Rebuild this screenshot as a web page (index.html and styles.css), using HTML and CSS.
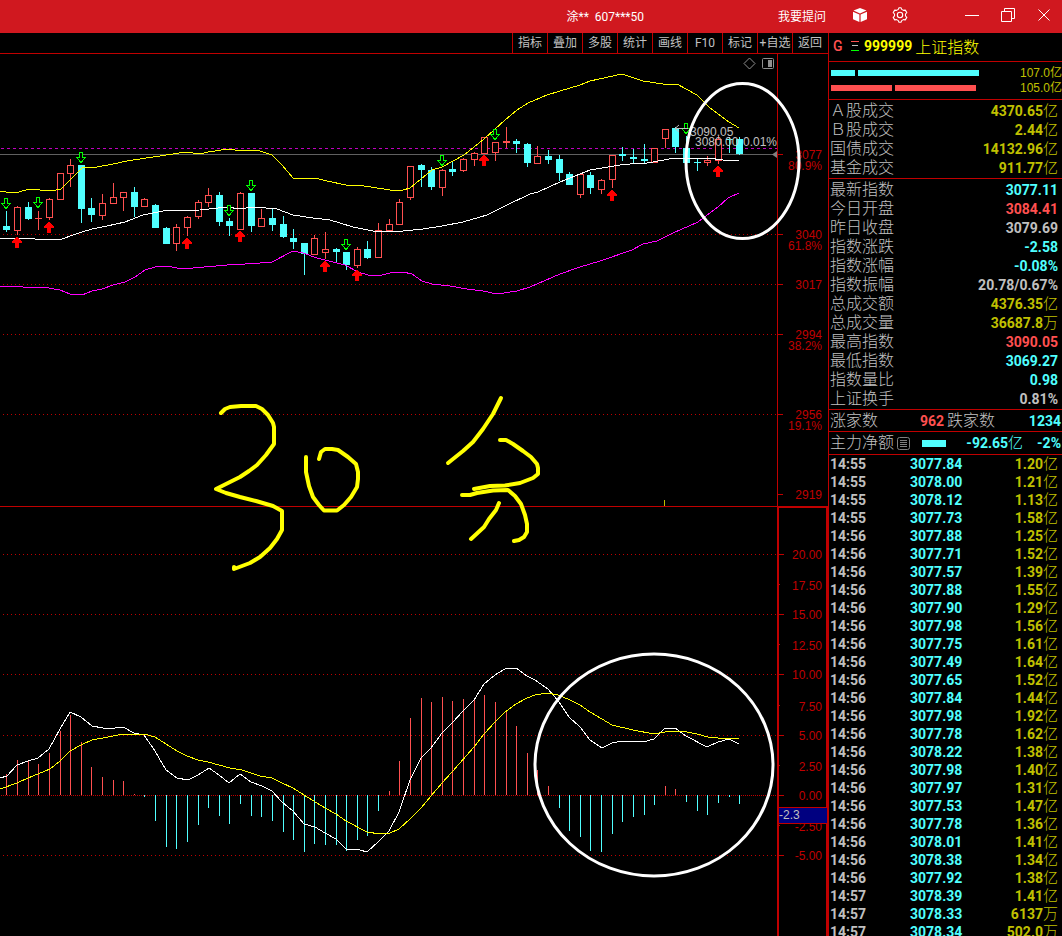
FILE: index.html
```html
<!DOCTYPE html>
<html lang="zh-CN">

<head>
    <meta charset="UTF-8">
    <meta name="viewport" content="width=device-width, initial-scale=1.0">
    <title>上证指数 999999</title>
    <link rel="stylesheet" href="styles.css">
</head>

<body>
    <header class="titlebar">
        <span class="account">涂** &nbsp;607***50</span>
        <a href="#" class="ask">我要提问</a>
        <button type="button" class="tool-btn" aria-label="应用">
            <svg width="16" height="16" viewBox="0 0 16 16" fill="#fff">
                <path d="M8 1 L14.5 3.6 L8 6.4 L1.5 3.6Z" />
                <path d="M1 4.8 L7.4 7.5 V15 L1 12.2Z" />
                <path d="M15 4.8 L8.6 7.5 V15 L15 12.2Z" />
            </svg>
        </button>
        <button type="button" class="tool-btn" aria-label="设置">
            <svg width="16" height="16" viewBox="0 0 16 16" fill="none" stroke="#fff" stroke-width="1.1" stroke-linejoin="round">
                <path d="M6.3 2.4 L7 .7 H9 L9.7 2.4 L11.4 3.4 L13.3 3.1 L14.8 5.6 L13.5 7 V9 L14.8 10.4 L13.3 12.9 L11.4 12.6 L9.7 13.6 L9 15.3 H7 L6.3 13.6 L4.6 12.6 L2.7 12.9 L1.2 10.4 L2.5 9 V7 L1.2 5.6 L2.7 3.1 L4.6 3.4Z" />
                <circle cx="8" cy="8" r="2.7" />
            </svg>
        </button>
        <div class="window-btns">
            <button type="button" aria-label="最小化">
                <svg width="14" height="14" viewBox="0 0 14 14" stroke="#fff"><path d="M0 7.5H14" /></svg>
            </button>
            <button type="button" aria-label="还原">
                <svg width="14" height="14" viewBox="0 0 14 14" fill="none" stroke="#fff"><path d="M.5 3.5H10.5V13.5H.5Z M3.5 3.5V.5H13.5V10.5H10.5" /></svg>
            </button>
            <button type="button" aria-label="关闭">
                <svg width="12" height="12" viewBox="0 0 12 12" stroke="#fff"><path d="M.5 .5L11.5 11.5M11.5 .5L.5 11.5" /></svg>
            </button>
        </div>
    </header>

    <main class="workspace">
        <section class="chart-pane">
            <nav class="toolbar">
                <button type="button">指标</button>
                <button type="button">叠加</button>
                <button type="button">多股</button>
                <button type="button">统计</button>
                <button type="button">画线</button>
                <button type="button">F10</button>
                <button type="button">标记</button>
                <button type="button">+自选</button>
                <button type="button">返回</button>
            </nav>

            <svg class="chart" viewBox="0 54 828 882">
                <!-- grid -->
                <g class="grid">
                    <path d="M3 234.5H777M3 284.5H777M3 334.5H777M3 414.5H777" />
                    <path d="M3 554.5H777M3 614.5H777M3 674.5H777M3 735.5H777M3 855.5H777" />
                    <path class="zero" d="M1 795.5H777" />
                </g>
                <path class="price-line" d="M1 148.5H777" />
                <path class="last-line" d="M0 154.5H777" />

                <!-- frame and axis -->
                <g class="frame">
                    <path d="M777.5 54V506M0 506.5H828" />
                    <path class="thick" d="M778 936V507H827V936" />
                    <path d="M778 154.5h5M778 234.5h5M778 284.5h5M778 334.5h5M778 414.5h5M778 494.5h5" />
                    <path d="M779 554.5h5M779 614.5h5M779 674.5h5M779 735.5h5M779 795.5h5M779 855.5h5" />
                    <path d="M779 584.5h1M779 644.5h1M779 705.5h1M779 765.5h1M779 825.5h1" />
                </g>

                <g id="candles"></g>
                <g id="hist"></g>

                <polyline class="line yellow" points="0,191 6,192 19,192 29,189 51,191 61,189 82,168 97,167 113,164 127,161 153,157 173,154 185,152 200,154 208,152 228,149 242,151 255,150 260,151 272,155 282,165 293,178 303,179 315,178 327,181 346,185 358,185 390,190 403,190 410,188 432,170 442,167 453,161 464,155 484,139 505,120 517,110 528,103 547,95 560,91 580,85 590,81 622,74 643,81 663,84 677,84 697,95 710,108 729,122 739,128" />
                <polyline class="line white" points="0,238 23,239 29,238 35,239 62,239 73,235 82,232 92,229 107,226 125,222 143,215 163,211 200,210 218,208 230,207 237,209 255,207 277,209 293,215 313,218 330,220 353,227 378,232 403,231 423,229 442,226 463,222 487,215 505,206 530,194 538,192 560,182 590,170 620,165 630,164 647,163 675,158 708,158 723,160 739,160" />
                <polyline class="line magenta" points="0,286 23,287 43,287 60,290 70,294 82,295 92,291 102,289 113,285 125,282 135,277 145,270 155,267 167,266 177,268 193,268 227,265 245,264 260,263 272,262 293,251 303,253 317,258 345,265 358,272 368,275 378,276 390,273 403,272 412,274 422,281 432,284 450,286 467,289 483,291 497,294 517,291 530,287 560,274 580,267 600,261 632,250 643,244 657,241 673,233 698,222 710,213 718,207 728,198 739,193" />

                <polyline class="line white" points="0,778 7,776 17,765 28,761 38,758 49,749 60,729 70,712 81,717 92,726 103,728 115,728 123,727 134,733 144,735 155,751 166,770 177,778 188,780 198,775 209,768 219,775 229,783 240,774 251,782 262,786 272,791 282,802 293,811 304,824 315,827 325,833 336,839 346,849 360,850 367,852 378,842 389,831 399,812 410,780 421,758 431,748 442,733 452,723 463,711 474,700 484,684 495,675 505,669 516,668 527,676 535,680 548,689 559,702 569,717 580,727 590,740 602,748 612,743 623,741 637,741 643,742 654,739 665,728 675,728 686,736 707,747 718,742 729,739 739,744" />
                <polyline class="line yellow" points="0,789 17,783 28,778 50,769 60,761 70,751 81,745 92,740 103,738 123,734 144,734 155,737 166,744 177,751 187,756 198,760 208,762 230,768 242,770 260,776 272,778 282,783 293,788 304,795 325,808 336,814 346,821 367,832 380,834 390,833 399,829 410,819 421,808 442,783 452,772 474,747 484,734 495,722 505,712 516,704 527,698 535,695 547,693 558,695 570,700 580,705 590,712 602,719 612,725 633,730 654,734 665,732 675,731 687,732 697,734 708,737 718,738 732,738 739,739" />
                <path class="line tick" d="M664.5 500V506" />

                <g id="signals"></g>

                <g class="note">
                    <path d="M675 128.5H688M679 125L675 128.5L679 132" />
                    <text x="690" y="136">3090.05</text>
                    <text x="695" y="146">3080.00</text>
                    <text x="777" y="146" text-anchor="end">0.01%</text>
                </g>
                <path class="marker" d="M772 154.5L777 151V158Z" />

                <g class="corner">
                    <path d="M749.5 58L755 63.5L749.5 69L744 63.5Z" />
                    <rect x="762.5" y="58.5" width="11" height="10" rx="1" />
                    <rect class="fill" x="768" y="60" width="4" height="7" />
                </g>

                <g class="axis">
                    <text x="822" y="159">3077</text>
                    <text x="822" y="170">80.9%</text>
                    <text x="822" y="239">3040</text>
                    <text x="822" y="250">61.8%</text>
                    <text x="822" y="289">3017</text>
                    <text x="822" y="339">2994</text>
                    <text x="822" y="350">38.2%</text>
                    <text x="822" y="419">2956</text>
                    <text x="822" y="430">19.1%</text>
                    <text x="822" y="499">2919</text>
                    <text x="822" y="559">20.00</text>
                    <text x="822" y="590">17.50</text>
                    <text x="822" y="619">15.00</text>
                    <text x="822" y="650">12.50</text>
                    <text x="822" y="679">10.00</text>
                    <text x="822" y="711">7.50</text>
                    <text x="822" y="740">5.00</text>
                    <text x="822" y="771">2.50</text>
                    <text x="822" y="800">0.00</text>
                    <text x="822" y="831">-2.50</text>
                    <text x="822" y="860">-5.00</text>
                </g>
                <rect class="cursor-box" x="778.5" y="807.5" width="49" height="16" />
                <text class="cursor-text" x="779" y="819">-2.3</text>

                <!-- hand drawn marks -->
                <ellipse class="ring" cx="742.5" cy="161" rx="56.5" ry="77.5" />
                <ellipse class="ring" cx="654" cy="765" rx="119" ry="111" />
                <g class="pen">
                    <path d="M221 413L225 409L230 407L241 406H256L262 409L268 415L273 423L274 427V444L266 455L257 465L249 471L240 477L216 489L226 493L240 497L256 501L273 506L282 511V530L277 539L270 548L260 557L250 563L234 569V567" />
                    <path d="M306 457V472L309 486L313 497L319 505L324 510.500H337L344 505L351 497L357 487L358 479V472L356 464L348 457L338 450L332 449H325L321 452L319 459" />
                    <path d="M501 398L493 414L483 429L473 442L463 451L448 463" />
                    <path d="M500 440H506L513 444L523 451L531 457L537 464L538 468V474L533 478L520 483L505 485.500L490 486L474 489" />
                    <path d="M462 495H470L477 493L493 490.500L508 490L515 496L521 504L525 515L527 524V532L524 537L519 540L514 541" />
                    <path d="M499 503L496 510L489 519L484 527L471 539" />
                </g>
            </svg>
        </section>

        <aside class="quote">
            <div class="quote-head">
                <span class="flag">G</span>
                <svg width="8" height="10" viewBox="0 0 8 10">
                    <path d="M0 .5H8" stroke="#ff5050" />
                    <path d="M1 4.5H7" stroke="#c0c0c0" />
                    <path d="M0 9.500H8" stroke="#00ff00" />
                </svg>
                <b>999999</b>
                <h1>上证指数</h1>
            </div>

            <div class="flows">
                <div class="flow down"><i style="width: 24px"></i><i style="width: 121px"></i><span>107.0亿</span></div>
                <div class="flow up"><i style="width: 61px"></i><i style="width: 81px"></i><span>105.0亿</span></div>
            </div>

            <table class="stats">
                <tr><th>Ａ股成交</th><td class="amount">4370.65<span>亿</span></td></tr>
                <tr><th>Ｂ股成交</th><td class="amount">2.44<span>亿</span></td></tr>
                <tr><th>国债成交</th><td class="amount">14132.96<span>亿</span></td></tr>
                <tr><th>基金成交</th><td class="amount">911.77<span>亿</span></td></tr>
            </table>

            <table class="stats">
                <tr><th>最新指数</th><td class="down">3077.11</td></tr>
                <tr><th>今日开盘</th><td class="up">3084.41</td></tr>
                <tr><th>昨日收盘</th><td>3079.69</td></tr>
                <tr><th>指数涨跌</th><td class="down">-2.58</td></tr>
                <tr><th>指数涨幅</th><td class="down">-0.08%</td></tr>
                <tr><th>指数振幅</th><td>20.78/0.67%</td></tr>
                <tr><th>总成交额</th><td class="amount">4376.35<span>亿</span></td></tr>
                <tr><th>总成交量</th><td class="amount">36687.8<span>万</span></td></tr>
                <tr><th>最高指数</th><td class="up">3090.05</td></tr>
                <tr><th>最低指数</th><td class="down">3069.27</td></tr>
                <tr><th>指数量比</th><td class="down">0.98</td></tr>
                <tr><th>上证换手</th><td>0.81%</td></tr>
            </table>

            <div class="breadth">
                <span class="label">涨家数</span><b class="up">962</b>
                <span class="label">跌家数</span><b class="down">1234</b>
            </div>

            <div class="netflow">
                <span class="label">主力净额</span>
                <svg width="13" height="13" viewBox="0 0 13 13" fill="none" stroke="#808080">
                    <rect x=".5" y=".5" width="12" height="12" rx="2" />
                    <path d="M3 3.500H10M3 5.500H10M3 7.500H10M3 9.500H10" />
                </svg>
                <i class="bar"></i>
                <b class="down net">-92.65<span>亿</span></b>
                <b class="down">-2%</b>
            </div>

            <table class="ticks">
                <tr><td>14:55</td><td class="down">3077.84</td><td class="amount">1.20<span>亿</span></td></tr>
                <tr><td>14:55</td><td class="down">3078.00</td><td class="amount">1.21<span>亿</span></td></tr>
                <tr><td>14:55</td><td class="down">3078.12</td><td class="amount">1.13<span>亿</span></td></tr>
                <tr><td>14:55</td><td class="down">3077.73</td><td class="amount">1.58<span>亿</span></td></tr>
                <tr><td>14:56</td><td class="down">3077.88</td><td class="amount">1.25<span>亿</span></td></tr>
                <tr><td>14:56</td><td class="down">3077.71</td><td class="amount">1.52<span>亿</span></td></tr>
                <tr><td>14:56</td><td class="down">3077.57</td><td class="amount">1.39<span>亿</span></td></tr>
                <tr><td>14:56</td><td class="down">3077.88</td><td class="amount">1.55<span>亿</span></td></tr>
                <tr><td>14:56</td><td class="down">3077.90</td><td class="amount">1.29<span>亿</span></td></tr>
                <tr><td>14:56</td><td class="down">3077.98</td><td class="amount">1.56<span>亿</span></td></tr>
                <tr><td>14:56</td><td class="down">3077.75</td><td class="amount">1.61<span>亿</span></td></tr>
                <tr><td>14:56</td><td class="down">3077.49</td><td class="amount">1.64<span>亿</span></td></tr>
                <tr><td>14:56</td><td class="down">3077.65</td><td class="amount">1.52<span>亿</span></td></tr>
                <tr><td>14:56</td><td class="down">3077.84</td><td class="amount">1.44<span>亿</span></td></tr>
                <tr><td>14:56</td><td class="down">3077.98</td><td class="amount">1.92<span>亿</span></td></tr>
                <tr><td>14:56</td><td class="down">3077.78</td><td class="amount">1.62<span>亿</span></td></tr>
                <tr><td>14:56</td><td class="down">3078.22</td><td class="amount">1.38<span>亿</span></td></tr>
                <tr><td>14:56</td><td class="down">3077.98</td><td class="amount">1.40<span>亿</span></td></tr>
                <tr><td>14:56</td><td class="down">3077.97</td><td class="amount">1.31<span>亿</span></td></tr>
                <tr><td>14:56</td><td class="down">3077.53</td><td class="amount">1.47<span>亿</span></td></tr>
                <tr><td>14:56</td><td class="down">3077.78</td><td class="amount">1.36<span>亿</span></td></tr>
                <tr><td>14:56</td><td class="down">3078.01</td><td class="amount">1.41<span>亿</span></td></tr>
                <tr><td>14:56</td><td class="down">3078.38</td><td class="amount">1.34<span>亿</span></td></tr>
                <tr><td>14:56</td><td class="down">3077.92</td><td class="amount">1.38<span>亿</span></td></tr>
                <tr><td>14:57</td><td class="down">3078.39</td><td class="amount">1.41<span>亿</span></td></tr>
                <tr><td>14:57</td><td class="down">3078.33</td><td class="amount">6137<span>万</span></td></tr>
                <tr><td>14:57</td><td class="down">3078.34</td><td class="amount">502.0<span>万</span></td></tr>
            </table>
        </aside>
    </main>

    <script src="chart.js"></script>
</body>

</html>
```
FILE: styles.css
```css
* {
    margin: 0;
    padding: 0;
    box-sizing: border-box;
}

body {
    height: 100vh;
    display: flex;
    flex-direction: column;
    overflow: hidden;
    background: #000;
    color: #c0c0c0;
    font-family: Roboto, "Noto Sans CJK SC", sans-serif;
    font-size: 14px;
}

button {
    background: none;
    border: none;
    color: inherit;
    font-family: inherit;
    cursor: pointer;
}

svg {
    display: block;
}

/* Title bar */
.titlebar {
    flex: none;
    height: 33px;
    padding-bottom: 3px;
    display: flex;
    align-items: center;
    justify-content: flex-end;
    background: #d0181f;
    color: #fff;
}

.account {
    margin-right: 134px;
    font-size: 12px;
}

.ask {
    margin-right: 14px;
    color: #fff;
    font-size: 12px;
    text-decoration: none;
}

.tool-btn {
    width: 40px;
    height: 30px;
    display: flex;
    align-items: center;
    justify-content: center;
}

.window-btns {
    display: flex;
    margin-left: 34px;
}

.window-btns button {
    width: 36px;
    height: 30px;
    display: flex;
    align-items: center;
    justify-content: center;
}

/* Layout */
.workspace {
    flex: 1;
    min-height: 0;
    display: grid;
    grid-template-columns: minmax(0, 1fr) 234px;
    overflow: hidden;
}

.chart-pane {
    min-height: 0;
    overflow: hidden;
}

.toolbar {
    height: 21px;
    padding-right: 1px;
    display: flex;
    justify-content: flex-end;
    border-bottom: 1px solid #c00000;
}

.toolbar button {
    width: 35px;
    border-left: 1px solid #c00000;
    color: #c0c0c0;
    font-size: 12px;
    line-height: 20px;
    white-space: nowrap;
}

/* Chart */
.chart {
    width: 100%;
    height: auto;
    font-family: "Liberation Sans", Arial, sans-serif;
    font-size: 12px;
}

.grid path,
.price-line,
.last-line,
.frame path,
.line,
#candles,
#hist,
#signals {
    shape-rendering: crispEdges;
}

.grid path {
    stroke: #c00000;
    stroke-dasharray: 1 3;
}

.grid .zero {
    stroke-dasharray: 1 1;
}

.price-line {
    stroke: #c000c0;
    stroke-dasharray: 3 3;
}

.last-line {
    stroke: #606060;
}

.frame path {
    fill: none;
    stroke: #c00000;
}

.frame .thick {
    stroke-width: 2;
}

.line {
    fill: none;
    stroke-width: 1;
}

.yellow {
    stroke: #ffff00;
}

.white {
    stroke: #fff;
}

.magenta {
    stroke: #ff00ff;
}

.tick {
    stroke: #c0c000;
}

.rise {
    fill: #000;
    stroke: #ff5050;
}

.fall {
    fill: #50ffff;
    stroke: #50ffff;
}

.buy {
    fill: #ff0000;
}

.sell {
    fill: #000;
    stroke: #00ff00;
}

.note path {
    fill: none;
    stroke: #c0c0c0;
}

.note text,
.cursor-text {
    fill: #c0c0c0;
}

.marker {
    fill: #808080;
}

.corner path,
.corner rect {
    fill: none;
    stroke: #909090;
}

.corner .fill {
    fill: #909090;
    stroke: none;
}

.axis text {
    fill: #c00000;
    text-anchor: end;
}

.cursor-box {
    fill: #000080;
    stroke: #c00000;
}

.ring {
    fill: none;
    stroke: #fff;
    stroke-width: 3;
}

.pen path {
    fill: none;
    stroke: #ffff00;
    stroke-width: 4;
    stroke-linecap: round;
    stroke-linejoin: round;
}

/* Quote panel */
.quote {
    min-height: 0;
    overflow: hidden;
    border-left: 1px solid #c00000;
}

.quote-head {
    height: 29px;
    padding: 0 0 2px 4px;
    display: flex;
    align-items: center;
    border-bottom: 1px solid #c00000;
    color: #ffff00;
}

.quote-head .flag {
    width: 18px;
    color: #ff5050;
    font-weight: 500;
}

.quote-head b {
    margin: 0 3px 0 5px;
}

.quote-head h1 {
    font-size: 16px;
    font-weight: 300;
}

.flows {
    height: 38px;
    padding: 3px 0 3px 2px;
    border-bottom: 1px solid #c00000;
}

.flow {
    height: 15px;
    display: flex;
    align-items: center;
    gap: 3px;
}

.flow i {
    height: 6px;
    background: currentColor;
}

.flow span {
    margin-left: auto;
    color: #c0c000;
    font-family: "Liberation Sans", "Noto Sans CJK SC", sans-serif;
    font-size: 12px;
    line-height: 14px;
}

.up {
    color: #ff5050;
}

.down {
    color: #50ffff;
}

.amount {
    color: #c0c000;
}

.amount span,
.net span {
    font-size: 15px;
    font-weight: 300;
}

.label,
.stats th {
    font-size: 16px;
    font-weight: 300;
}

.stats,
.ticks {
    width: 100%;
    border-collapse: separate;
    border-spacing: 0;
    line-height: 16px;
}

.stats {
    padding: 1px 4px 1px 1px;
    border-bottom: 1px solid #c00000;
}

.stats tr {
    height: 19px;
}

.stats th {
    text-align: left;
}

.stats td {
    text-align: right;
    font-weight: 700;
}

.breadth,
.netflow {
    display: flex;
    align-items: center;
    padding: 0 1px;
    border-bottom: 1px solid #c00000;
    line-height: 16px;
}

.breadth {
    height: 22px;
}

.breadth .up {
    margin: 0 3px 0 auto;
}

.breadth .down {
    width: 66px;
    text-align: right;
}

.netflow {
    height: 23px;
}

.netflow svg {
    margin-left: 3px;
}

.netflow .bar {
    width: 24px;
    height: 7px;
    margin-left: 12px;
    background: #50ffff;
}

.netflow .net {
    margin: 0 14px 0 auto;
}

.ticks {
    padding: 0 4px 0 1px;
    font-weight: 700;
}

.ticks tr {
    height: 18px;
}

.ticks td:first-child {
    width: 80px;
}

.ticks td:last-child {
    text-align: right;
}
```
FILE: chart.js
```js
// Each bar: [direction, high, body top, body bottom, low]
const candles = [
    ['d', 211, 226, 230, 232], ['u', 206, 207, 231, 235], ['d', 202, 207, 219, 220], ['u', 211, 218, 219, 230],
    ['u', 198, 199, 218, 220], ['u', 173, 173, 200, 200], ['u', 159, 165, 174, 187], ['d', 165, 165, 209, 223],
    ['d', 198, 208, 215, 222], ['u', 194, 203, 216, 220], ['u', 183, 197, 204, 204], ['u', 192, 192, 198, 211],
    ['d', 187, 192, 207, 217], ['u', 198, 199, 207, 207], ['d', 204, 205, 228, 228], ['d', 227, 228, 244, 244],
    ['u', 224, 227, 244, 251], ['u', 216, 217, 228, 236], ['u', 200, 202, 217, 219], ['u', 188, 195, 203, 207],
    ['d', 192, 195, 222, 226], ['d', 218, 221, 226, 236], ['u', 192, 193, 230, 230], ['d', 193, 193, 226, 232],
    ['u', 209, 218, 227, 227], ['d', 209, 218, 225, 231], ['d', 216, 224, 237, 238], ['d', 229, 238, 242, 249],
    ['d', 243, 243, 254, 275], ['u', 235, 238, 255, 255], ['u', 232, 249, 253, 259], ['d', 248, 249, 252, 262],
    ['d', 252, 252, 265, 270], ['u', 247, 249, 266, 268], ['d', 241, 249, 258, 259], ['u', 223, 230, 258, 258],
    ['u', 219, 224, 231, 231], ['u', 199, 202, 225, 225], ['u', 166, 166, 198, 200], ['d', 164, 165, 170, 187],
    ['d', 167, 170, 187, 190], ['u', 169, 170, 188, 196], ['d', 162, 169, 172, 176], ['u', 158, 159, 171, 172],
    ['u', 152, 153, 160, 166], ['u', 137, 137, 154, 154], ['u', 142, 142, 153, 161], ['u', 127, 141, 143, 148],
    ['d', 139, 141, 144, 153], ['d', 143, 144, 163, 167], ['u', 146, 156, 164, 164], ['d', 150, 156, 160, 164],
    ['d', 155, 159, 173, 181], ['d', 172, 174, 185, 185], ['u', 173, 174, 195, 198], ['d', 172, 175, 188, 194],
    ['u', 179, 180, 190, 194], ['u', 155, 155, 180, 188], ['d', 147, 154, 156, 161], ['d', 149, 157, 159, 164],
    ['d', 144, 159, 161, 164], ['u', 148, 148, 163, 163], ['u', 129, 129, 139, 148], ['d', 127, 128, 147, 153],
    ['d', 136, 148, 163, 163], ['d', 158, 162, 163, 171], ['u', 156, 160, 163, 166], ['u', 136, 139, 161, 164],
    ['d', 137, 139, 140, 153], ['d', 137, 139, 154, 155]
];

// End of each histogram bar
const hist = [
    774, 760, 761, 764, 753, 731, 715, 742, 767, 777, 780, 781, 794, 797, 821, 847, 849, 842, 825, 808,
    816, 824, 804, 816, 817, 821, 832, 840, 852, 844, 845, 845, 851, 840, 836, 811, 791, 761, 718, 698,
    702, 697, 701, 699, 699, 695, 702, 711, 726, 753, 770, 786, 808, 831, 837, 851, 852, 834, 822, 817,
    815, 805, 786, 789, 802, 811, 815, 803, 797, 804
];
const ZERO = 795;

// Signal arrows: [x, top]
const sells = [[6, 198], [38, 197], [81, 152], [229, 205], [251, 180], [346, 239], [442, 155], [495, 129], [686, 123]];
const buys = [[17, 237], [49, 222], [187, 238], [240, 231], [325, 261], [357, 270], [484, 155], [612, 190], [718, 166]];

const barX = i => Math.round(6.42 + 10.619 * i);

document.getElementById('candles').innerHTML = candles.map(([dir, high, top, bottom, low], i) => {
    const x = barX(i);
    const cls = dir === 'u' ? 'rise' : 'fall';
    const height = Math.max(bottom - top - 1, 0);
    const body = height < 1
        ? `<path d="M${x - 3} ${top + 0.5}h7" />`
        : `<rect x="${x - 2.5}" y="${top + 0.5}" width="6" height="${height}" />`;
    return `<g class="${cls}"><path d="M${x + 0.5} ${high}V${low}" />${body}</g>`;
}).join('');

document.getElementById('hist').innerHTML = hist.map((y, i) =>
    `<path class="${y < ZERO ? 'rise' : 'fall'}" d="M${barX(i) + 0.5} ${ZERO}V${y}" />`
).join('');

document.getElementById('signals').innerHTML =
    sells.map(([x, y]) => `<path class="sell" d="M${x - 1.5} ${y + 0.5}h3v5h3l-4.5 5l-4.5 -5h3z" />`).join('') +
    buys.map(([x, y]) => `<path class="buy" d="M${x - 5} ${y + 5}l4 -5h2l4 5v1h-3v5h-4v-5h-3z" />`).join('');
```
